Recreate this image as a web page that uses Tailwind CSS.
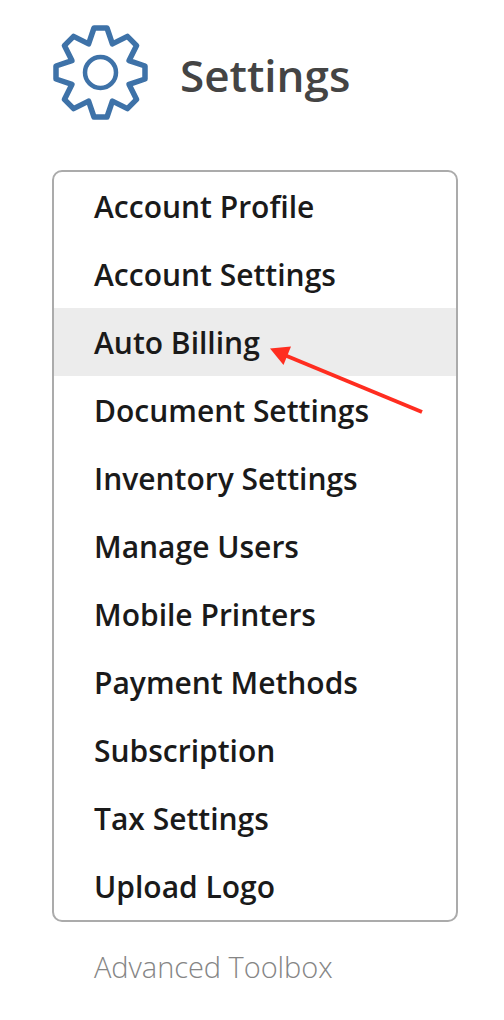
<!DOCTYPE html>
<html><head><script src="https://cdn.jsdelivr.net/npm/@tailwindcss/browser@4"></script></head>
<body class="bg-white">
<div class="relative w-[504px] h-[1020px] overflow-hidden pl-[52px] pt-[24px] font-['Open_Sans',sans-serif]">
  <div class="flex items-center h-[96px] gap-[31px]">
    <svg class="w-[97px] h-[97px] shrink-0" viewBox="-48.5 -48.5 97 97" fill="none" stroke="#3e72a8" stroke-width="5.5" stroke-linejoin="round">
      <path d="M-6.5 -44.5L6.5 -44.5L11.9 -28.6L26.9 -36.1L36.1 -26.9L28.6 -11.9L44.5 -6.5L44.5 6.5L28.6 11.9L36.1 26.9L26.9 36.1L11.9 28.6L6.5 44.5L-6.5 44.5L-11.9 28.6L-26.9 36.1L-36.1 26.9L-28.6 11.9L-44.5 6.5L-44.5 -6.5L-28.6 -11.9L-36.1 -26.9L-26.9 -36.1L-11.9 -28.6Z"/>
      <circle r="15.5" stroke-width="4.5"/>
    </svg>
    <h1 class="text-[44px] leading-none font-semibold text-[#444444] pt-[6px]">Settings</h1>
  </div>
  <ul class="mt-[50px] w-[406px] border-2 border-[#ababab] rounded-[10px] text-[30px] font-semibold text-[#1a1a1a]">
    <li class="h-[68px] pl-[40px] flex items-center">Account Profile</li>
    <li class="h-[68px] pl-[40px] flex items-center">Account Settings</li>
    <li class="h-[68px] pl-[40px] flex items-center bg-[#ececec]">Auto Billing</li>
    <li class="h-[68px] pl-[40px] flex items-center">Document Settings</li>
    <li class="h-[68px] pl-[40px] flex items-center">Inventory Settings</li>
    <li class="h-[68px] pl-[40px] flex items-center">Manage Users</li>
    <li class="h-[68px] pl-[40px] flex items-center">Mobile Printers</li>
    <li class="h-[68px] pl-[40px] flex items-center">Payment Methods</li>
    <li class="h-[68px] pl-[40px] flex items-center">Subscription</li>
    <li class="h-[68px] pl-[40px] flex items-center">Tax Settings</li>
    <li class="h-[68px] pl-[40px] flex items-center">Upload Logo</li>
  </ul>
  <p class="mt-[23px] pl-[42px] text-[29px] leading-[44px] tracking-[-0.05px] font-light text-[#858585]">Advanced Toolbox</p>
  <svg class="absolute left-0 top-0 w-[504px] h-[1020px] pointer-events-none" viewBox="0 0 504 1020">
    <line x1="422" y1="412" x2="282" y2="354" stroke="#ff2d20" stroke-width="4"/>
    <polygon points="270,348.5 291,346.5 283.5,365" fill="#ff2d20"/>
  </svg>
</div>
</body></html>
